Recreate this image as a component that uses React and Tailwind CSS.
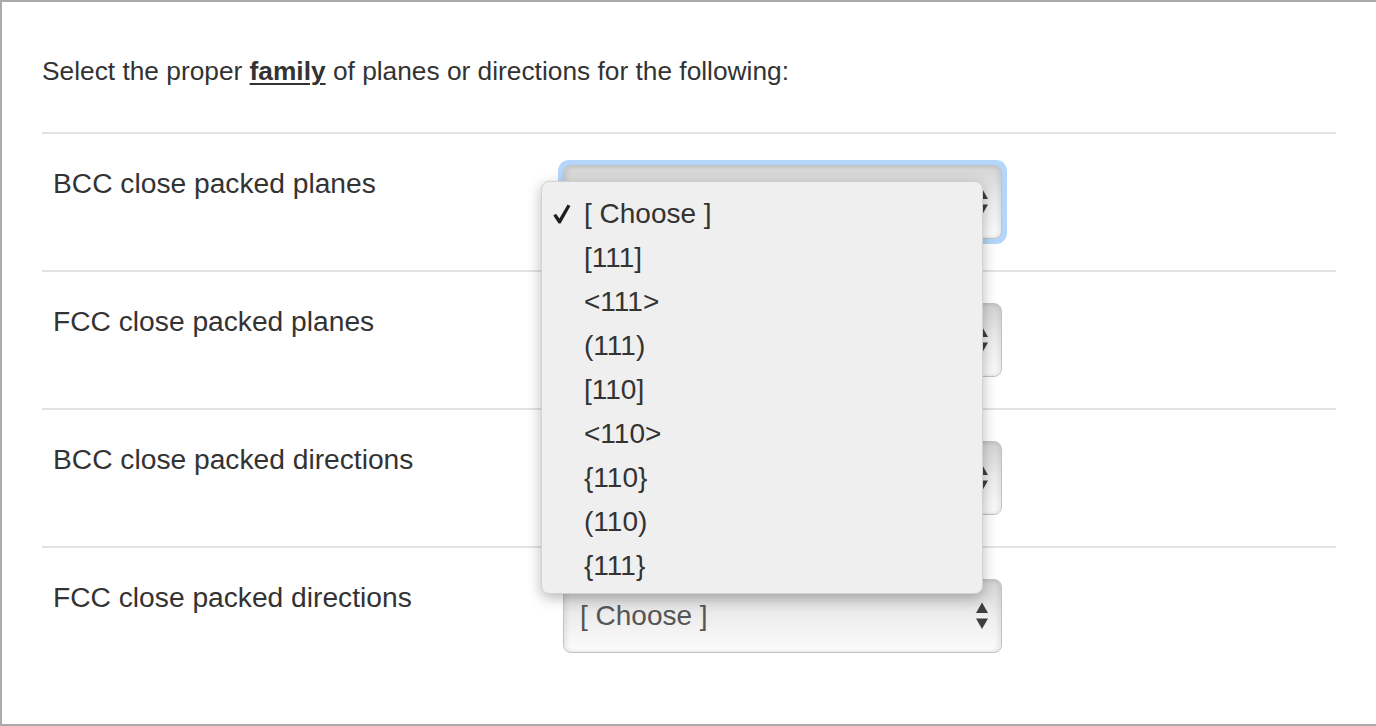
import React from "react";

const rows = [
  "BCC close packed planes",
  "FCC close packed planes",
  "BCC close packed directions",
  "FCC close packed directions",
];

const options = ["[ Choose ]", "[111]", "<111>", "(111)", "[110]", "<110>", "{110}", "(110)", "{111}"];

function Arrows() {
  return (
    <svg width="12" height="27" viewBox="0 0 12 27" className="absolute right-[13px] top-1/2 -translate-y-1/2">
      <polygon points="6,0 12,10.5 0,10.5" fill="#3e3e3e" />
      <polygon points="0,16 12,16 6,26.5" fill="#3e3e3e" />
    </svg>
  );
}

function Select({ focused, showText }) {
  return (
    <div className={focused ? "rounded-[11px] p-[5px] -m-[5px] bg-[#b5d6fb]" : ""}>
      <div className="relative w-[439px] h-[74px] rounded-[8px] border border-[#c2c2c2] bg-gradient-to-b from-[#d4d4d4] via-[#ededed] to-[#fcfcfc] shadow-[inset_3px_0_4px_rgba(0,0,0,0.07),inset_-3px_0_4px_rgba(0,0,0,0.07)] flex items-center pl-[16px]">
        {showText && (
          <span className="text-[28px] text-[#555] leading-none">[ Choose ]</span>
        )}
        <Arrows />
      </div>
    </div>
  );
}

export default function App() {
  return (
    <div
      className="w-[1376px] h-[726px] bg-white border-l-2 border-t-2 border-b-2 border-[#ababab] px-[40px] overflow-hidden"
      style={{ fontFamily: '"Liberation Sans", Arial, sans-serif' }}
    >
      <p className="pt-[51px] text-[26.3px] leading-[36px] text-[#333] mb-[43px]">
        Select the proper <b className="underline underline-offset-[3px] decoration-[2px]">family</b> of planes or directions for the following:
      </p>
      {rows.map((label, i) => (
        <div key={label}>
          <div className="h-[2px] bg-[#e2e2e2]" />
          <div className="h-[136px] flex">
            <div className="w-[521px] pl-[11px] pt-[29px] text-[28.2px] leading-[40px] text-[#333]">
              {label}
            </div>
            <div className="pt-[31px] relative">
              <Select focused={i === 0} showText={i === 3} />
              {i === 0 && (
                <div className="absolute left-[-22px] top-[47px] w-[442px] rounded-[8px] bg-[#efefef] border border-[#d2d2d2] shadow-[0_4px_14px_rgba(0,0,0,0.28)] pt-[10px] pb-[5px] z-10">
                  {options.map((o, j) => (
                    <div key={o} className="h-[44px] flex items-center text-[28px] text-[#333] relative pl-[42px]">
                      {j === 0 && (
                        <svg width="18" height="20" viewBox="0 0 18 20" className="absolute left-[11px] top-[12px]">
                          <path d="M0.3 11.6 L3 9.8 L6.4 14.6 L14.6 0.4 L17.4 1.9 L7.6 19.4 L5.6 19.4 Z" fill="#1f1f1f" />
                        </svg>
                      )}
                      <span className="leading-none">{o}</span>
                    </div>
                  ))}
                </div>
              )}
            </div>
          </div>
        </div>
      ))}
    </div>
  );
}
